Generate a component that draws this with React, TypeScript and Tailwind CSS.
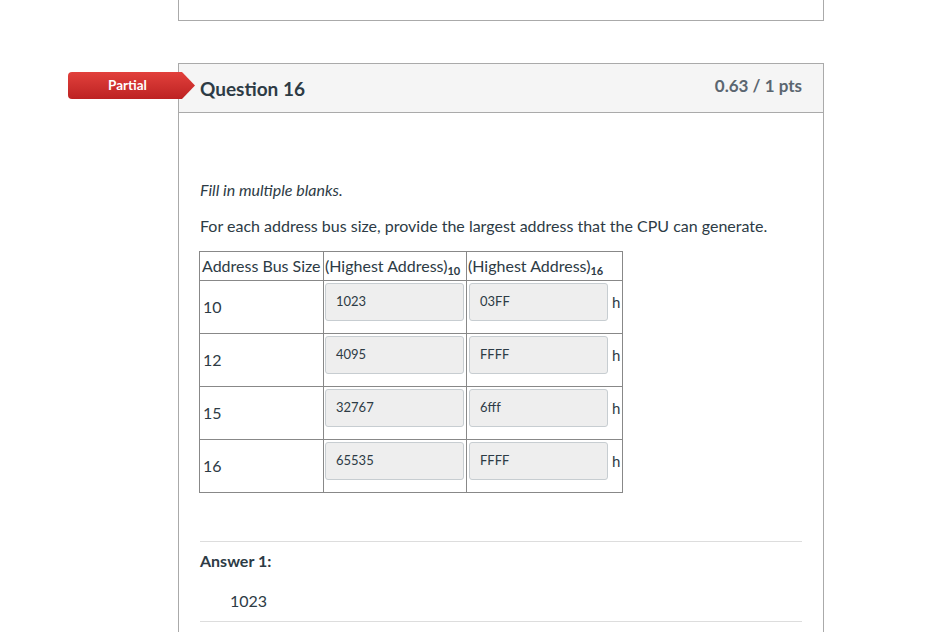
import React from 'react'

const rows = [
  { size: '10', dec: '1023', hex: '03FF' },
  { size: '12', dec: '4095', hex: 'FFFF' },
  { size: '15', dec: '32767', hex: '6fff' },
  { size: '16', dec: '65535', hex: 'FFFF' },
]

function Blank({ value }: { value: string }) {
  return (
    <div className="mb-[10px] h-[38px] w-[139px] shrink-0 rounded-[3px] border border-[#c7cdd1] bg-[#eeeeee] pl-[10px] pt-[7px] text-[13px] leading-[20px] text-[#2d3b45]">
      {value}
    </div>
  )
}

export default function App() {
  return (
    <div
      className="min-h-screen bg-white text-[#2d3b45]"
      style={{ fontFamily: 'Lato, "Noto Sans", sans-serif' }}
    >
      <div className="ml-[178px] w-[646px]">
        <div className="h-[21px] border border-t-0 border-[#aaaaaa]" />

        <div className="relative mt-[42px] border border-[#aaaaaa]">
          {/* Partial badge */}
          <div className="absolute left-[-111px] top-[8px] flex h-[27px] items-center">
            <div className="flex h-[27px] w-[113px] items-center justify-center rounded-l-[4px] bg-gradient-to-b from-[#e2403c] to-[#bd2222] pl-[6px] text-[13.5px] font-bold text-white">
              Partial
            </div>
            <svg width="14" height="27" viewBox="0 0 14 27" className="block">
              <defs>
                <linearGradient id="pg" x1="0" y1="0" x2="0" y2="1">
                  <stop offset="0" stopColor="#e2403c" />
                  <stop offset="1" stopColor="#bd2222" />
                </linearGradient>
              </defs>
              <polygon points="0,0 1,0 14,13.5 1,27 0,27" fill="url(#pg)" />
            </svg>
          </div>

          <div className="flex h-[49px] items-center justify-between border-b border-[#aaaaaa] bg-[#f5f5f5] pl-[21px] pr-[21px]">
            <h2 className="pt-[2px] text-[19px] font-bold text-[#2d3b45]">Question 16</h2>
            <div className="pb-[4px] text-[17px] font-bold text-[#5b6670]">0.63 / 1 pts</div>
          </div>

          <div className="px-[21px] pt-[66px] pb-[10px]">
            <p className="text-[16px] italic leading-[22px]">Fill in multiple blanks.</p>
            <p className="mt-[14px] text-[16px] leading-[22px]">
              For each address bus size, provide the largest address that the CPU can generate.
            </p>

            <table className="ml-[-1px] mt-[14px] w-[423px] table-fixed border-collapse border border-[#888888] text-[16px]">
              <thead>
                <tr className="h-[29px]">
                  <th className="w-[124px] border border-[#888888] px-[2px] text-left font-normal whitespace-nowrap">
                    Address Bus Size
                  </th>
                  <th className="w-[143px] border border-[#888888] px-[1px] text-left font-normal whitespace-nowrap">
                    (Highest Address)<sub className="text-[11px] font-bold">10</sub>
                  </th>
                  <th className="w-[156px] border border-[#888888] px-[1px] text-left font-normal whitespace-nowrap">
                    (Highest Address)<sub className="text-[11px] font-bold">16</sub>
                  </th>
                </tr>
              </thead>
              <tbody>
                {rows.map((r) => (
                  <tr key={r.size} className="h-[53px]">
                    <td className="border border-[#888888] px-[3px] pb-[1px] align-middle">{r.size}</td>
                    <td className="border border-[#888888] px-[1px] pt-[2px] align-top">
                      <Blank value={r.dec} />
                    </td>
                    <td className="border border-[#888888] pl-[2px] pr-0 pt-[2px] align-top">
                      <div className="flex items-start gap-[4px]">
                        <Blank value={r.hex} />
                        <span className="pt-[9px] text-[15px] leading-[20px]">h</span>
                      </div>
                    </td>
                  </tr>
                ))}
              </tbody>
            </table>

            <div className="mt-[48px] border-t border-[#dddddd] pt-[8px]">
              <div className="text-[16px] font-bold leading-[22px]">Answer 1:</div>
              <div className="pl-[30px] pt-[18px] text-[16px] leading-[22px]">1023</div>
              <div className="mt-[9px] border-t border-[#dddddd]" />
            </div>
          </div>
        </div>
      </div>
    </div>
  )
}
